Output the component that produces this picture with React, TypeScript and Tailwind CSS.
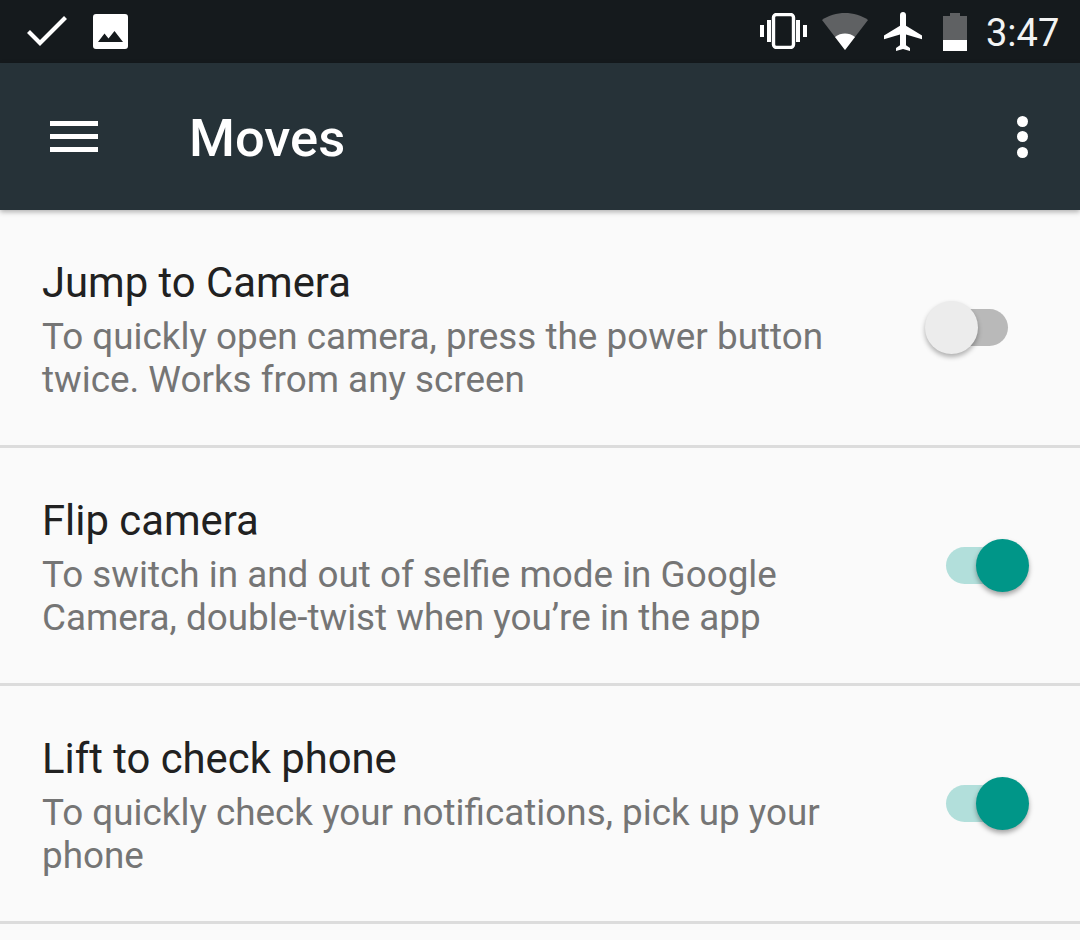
const rows = [
  {
    title: "Jump to Camera",
    lines: ["To quickly open camera, press the power button", "twice. Works from any screen"],
    on: false,
  },
  {
    title: "Flip camera",
    lines: ["To switch in and out of selfie mode in Google", "Camera, double-twist when you’re in the app"],
    on: true,
  },
  {
    title: "Lift to check phone",
    lines: ["To quickly check your notifications, pick up your", "phone"],
    on: true,
  },
];

function Toggle({ on }: { on: boolean }) {
  if (on) {
    return (
      <div className="relative h-[53px] w-[83px]">
        <div className="absolute left-0 top-[8px] h-[37px] w-[62px] rounded-full bg-[#b2dfdb]" />
        <div className="absolute left-[30px] top-0 h-[53px] w-[53px] rounded-full bg-[#009688] shadow-[0_3px_5px_rgba(0,0,0,0.35)]" />
      </div>
    );
  }
  return (
    <div className="relative h-[53px] w-[83px]">
      <div className="absolute left-0 top-[8px] h-[37px] w-[62px] rounded-full bg-[#b9b9b9]" />
      <div className="absolute left-[-21px] top-0 h-[53px] w-[53px] rounded-full bg-[#ececec] shadow-[0_3px_5px_rgba(0,0,0,0.3)]" />
    </div>
  );
}

function StatusBar() {
  return (
    <div className="flex h-[63px] items-center bg-[#151a1d] pl-[27px] pr-[21px] text-white">
      <svg width="40" height="32" viewBox="0 0 40 32" className="mt-[-1px]">
        <path d="M1.5 16.5 L13 28 L38.5 2.5" fill="none" stroke="#fff" strokeWidth="4.2" />
      </svg>
      <svg width="35" height="35" viewBox="0 0 35 35" className="ml-[26px] mt-[-1px]">
        <path
          fillRule="evenodd"
          d="M3 0H32A3 3 0 0 1 35 3V32A3 3 0 0 1 32 35H3A3 3 0 0 1 0 32V3A3 3 0 0 1 3 0ZM5 28H30L21.5 17L15.5 24.5L11.5 19.5Z"
          fill="#fff"
        />
      </svg>
      <div className="flex-1" />
      <svg width="47" height="36" viewBox="0 0 47 36" className="mt-[-1px]">
        <path d="M0 12h4v12H0zM43 12h4v12h-4z" fill="#fff" />
        <path d="M7 7h4v22H7zM36 7h4v22h-4z" fill="#fff" />
        <rect x="13.5" y="1.5" width="20" height="33" rx="3" fill="none" stroke="#fff" strokeWidth="3.4" />
      </svg>
      <svg width="46" height="37" viewBox="0 0 46 37" className="ml-[15px] mt-[-1px]">
        <path d="M0 7C13 -2.3 33 -2.3 46 7L23 37Z" fill="#5f6163" />
        <path d="M13 23.9C19 19.4 27 19.4 33 23.9L23 37Z" fill="#fff" />
      </svg>
      <svg width="38" height="39" viewBox="2 2 19 20" className="ml-[16px]" preserveAspectRatio="none">
        <path
          d="M21 16v-2l-8-5V3.500c0-.83-.67-1.500-1.500-1.500S10 2.670 10 3.500V9l-8 5v2l8-2.500V19l-2 1.500V22l3.500-1 3.500 1v-1.500L13 19v-5.500l8 2.500z"
          fill="#fff"
        />
      </svg>
      <svg width="24" height="38" viewBox="0 0 24 38" className="ml-[21px]">
        <path d="M7 0H17V3H24V27H0V3H7Z" fill="#5f6163" />
        <path d="M0 27H24V38H0Z" fill="#fff" />
      </svg>
      <span className="ml-[19px] mt-[2px] w-[73px] whitespace-nowrap font-['Roboto',sans-serif] text-[38px] leading-none text-[#f2f3f3]">
        3:47
      </span>
    </div>
  );
}

function Toolbar() {
  return (
    <div className="relative z-10 flex h-[147px] items-center bg-[#263238] pl-[50px] pr-[52px] shadow-[0_2px_5px_rgba(0,0,0,0.3)]">
      <div className="flex w-[48px] flex-col gap-[8px]">
        <div className="h-[5px] bg-white" />
        <div className="h-[5px] bg-white" />
        <div className="h-[5px] bg-white" />
      </div>
      <h1 className="ml-[91px] mt-[4px] flex-1 font-['Roboto',sans-serif] text-[52.500px] font-medium leading-none text-white">
        Moves
      </h1>
      <div className="flex flex-col gap-[4.500px]">
        <div className="h-[11px] w-[11px] rounded-full bg-white" />
        <div className="h-[11px] w-[11px] rounded-full bg-white" />
        <div className="h-[11px] w-[11px] rounded-full bg-white" />
      </div>
    </div>
  );
}

export default function App() {
  return (
    <div className="h-[940px] w-[1080px] overflow-hidden bg-[#fafafa] font-['Roboto',sans-serif]">
      <StatusBar />
      <Toolbar />
      {rows.map((row) => (
        <div
          key={row.title}
          className="flex h-[238px] items-center justify-between border-b-[3px] border-[#dcdcdc] pl-[42px] pr-[51px]"
        >
          <div className="mt-[4px]">
            <div className="text-[41.800px] leading-[50px] text-[#212121]">{row.title}</div>
            <div className="mt-[7px] text-[36.850px] leading-[43px] text-[#757575]">
              {row.lines.map((line) => (
                <div key={line}>{line}</div>
              ))}
            </div>
          </div>
          <Toggle on={row.on} />
        </div>
      ))}
    </div>
  );
}
